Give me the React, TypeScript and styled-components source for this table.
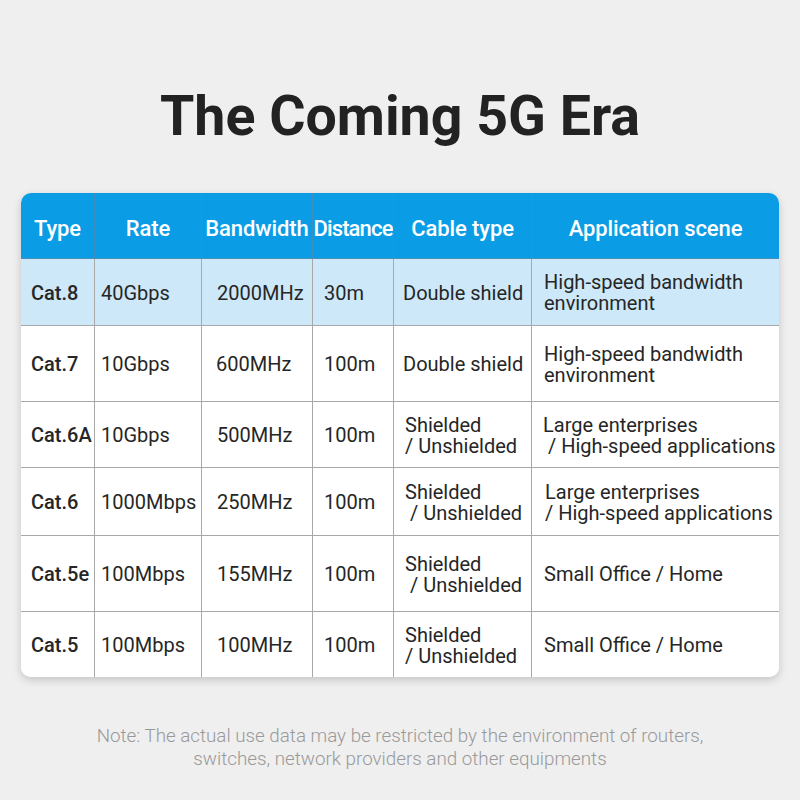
import React from "react";
import styled, { createGlobalStyle } from "styled-components";

const Global = createGlobalStyle`
  html, body { margin: 0; padding: 0; }
  body {
    width: 800px;
    height: 800px;
    background: #efefef;
    font-family: Roboto, "Liberation Sans", sans-serif;
    color: #222;
  }
`;

const Page = styled.div`
  width: 800px;
  height: 800px;
  box-sizing: border-box;
  padding: 83px 21px 0;
  display: flex;
  flex-direction: column;
  align-items: stretch;
`;

const Title = styled.h1`
  margin: 0;
  font-size: 55.5px;
  line-height: 68px;
  font-weight: 700;
  text-align: center;
  color: #222;
`;

const Card = styled.div`
  margin-top: 42px;
  width: 758px;
  border-radius: 10px;
  overflow: hidden;
  background: #fff;
  box-shadow: 0 3px 8px rgba(0, 0, 0, 0.18);
`;

const Row = styled.div<{ $h: number; $kind?: "head" | "hl" | "body"; $last?: boolean }>`
  display: grid;
  grid-template-columns: 73px 107px 111px 81px 138px 248px;
  height: ${(p) => p.$h}px;
  background: ${(p) => (p.$kind === "head" ? "#0a9de5" : p.$kind === "hl" ? "#cde8f8" : "#fff")};
  border-bottom: ${(p) => (p.$last ? "none" : p.$kind === "head" ? "1px solid #4a8fb8" : "1px solid #a8a8a8")};
  box-sizing: border-box;
`;

const HeadCell = styled.div<{ $tight?: boolean }>`
  display: flex;
  align-items: center;
  justify-content: center;
  padding-top: 5px;
  color: #fff;
  font-weight: 500;
  font-size: 22px;
  letter-spacing: ${(p) => (p.$tight ? "-0.85px" : "-0.1px")};
  white-space: nowrap;
  border-left: 1px solid #3f8ec0;
  &:first-child { border-left: none; }
`;

const Cell = styled.div<{ $pl: number; $bold?: boolean }>`
  display: flex;
  align-items: center;
  padding-left: ${(p) => p.$pl}px;
  padding-top: 2px;
  font-size: 20px;
  line-height: 21px;
  font-weight: ${(p) => (p.$bold ? 500 : 400)};
  color: #262626;
  white-space: pre;
  border-left: 1px solid #a8a8a8;
  &:first-child { border-left: none; }
`;

const Note = styled.p`
  margin: 48px 0 0;
  font-size: 18.8px;
  line-height: 23px;
  font-weight: 300;
  color: #999;
  text-align: center;
`;

const heads = ["Type", "Rate", "Bandwidth", "Distance", "Cable type", "Application scene"];

type R = { h: number; c: string[]; pad: number[] };

const rows: R[] = [
  { h: 67, c: ["Cat.8", "40Gbps", "2000MHz", "30m", "Double shield", "High-speed bandwidth\nenvironment"], pad: [10, 6, 15, 11, 9, 12] },
  { h: 76, c: ["Cat.7", "10Gbps", "600MHz", "100m", "Double shield", "High-speed bandwidth\nenvironment"], pad: [10, 6, 14, 11, 9, 12] },
  { h: 66, c: ["Cat.6A", "10Gbps", "500MHz", "100m", "Shielded\n/ Unshielded", "Large enterprises\n / High-speed applications"], pad: [10, 6, 15, 11, 11, 11] },
  { h: 68, c: ["Cat.6", "1000Mbps", "250MHz", "100m", "Shielded\n / Unshielded", "Large enterprises\n/ High-speed applications"], pad: [10, 6, 15, 11, 11, 13] },
  { h: 76, c: ["Cat.5e", "100Mbps", "155MHz", "100m", "Shielded\n / Unshielded", "Small Office / Home"], pad: [10, 6, 15, 11, 11, 12] },
  { h: 65, c: ["Cat.5", "100Mbps", "100MHz", "100m", "Shielded\n/ Unshielded", "Small Office / Home"], pad: [10, 6, 15, 11, 11, 12] },
];

export default function App() {
  return (
    <>
      <Global />
      <Page>
        <Title>The Coming 5G Era</Title>
        <Card>
          <Row $h={66} $kind="head">
            {heads.map((h) => (
              <HeadCell key={h} $tight={h === "Distance"}>
                {h}
              </HeadCell>
            ))}
          </Row>
          {rows.map((r, i) => (
            <Row key={i} $h={r.h} $kind={i === 0 ? "hl" : "body"} $last={i === rows.length - 1}>
              {r.c.map((t, j) => (
                <Cell key={j} $pl={r.pad[j]} $bold={j === 0}>
                  {t}
                </Cell>
              ))}
            </Row>
          ))}
        </Card>
        <Note>
          Note: The actual use data may be restricted by the environment of routers,
          <br />
          switches, network providers and other equipments
        </Note>
      </Page>
    </>
  );
}
